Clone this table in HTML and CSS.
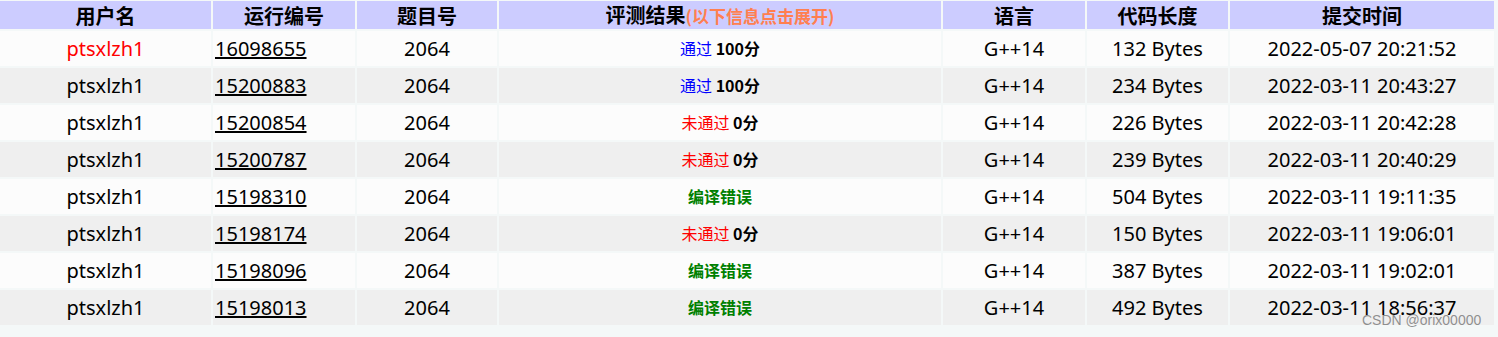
FILE: index.html
```html
<!DOCTYPE html>
<html lang="zh">
<head>
<meta charset="utf-8">
<link rel="stylesheet" href="styles.css">
</head>
<body>
<div class="wrap">
<table class="status">
  <colgroup>
    <col class="c1"><col class="c2"><col class="c3"><col class="c4"><col class="c5"><col class="c6"><col class="c7">
  </colgroup>
  <thead>
    <tr>
      <th>用户名</th><th>运行编号</th><th>题目号</th>
      <th>评测结果<span class="hint">(以下信息点击展开)</span></th>
      <th>语言</th><th>代码长度</th><th>提交时间</th>
    </tr>
  </thead>
  <tbody>
    <tr class="odd"><td class="me">ptsxlzh1</td><td class="rid"><a>16098655</a></td><td>2064</td><td class="res"><a class="ac">通过</a> <b>100分</b></td><td>G++14</td><td>132 Bytes</td><td>2022-05-07 20:21:52</td></tr>
    <tr class="even"><td>ptsxlzh1</td><td class="rid"><a>15200883</a></td><td>2064</td><td class="res"><a class="ac">通过</a> <b>100分</b></td><td>G++14</td><td>234 Bytes</td><td>2022-03-11 20:43:27</td></tr>
    <tr class="odd"><td>ptsxlzh1</td><td class="rid"><a>15200854</a></td><td>2064</td><td class="res"><span class="wa">未通过</span> <b>0分</b></td><td>G++14</td><td>226 Bytes</td><td>2022-03-11 20:42:28</td></tr>
    <tr class="even"><td>ptsxlzh1</td><td class="rid"><a>15200787</a></td><td>2064</td><td class="res"><span class="wa">未通过</span> <b>0分</b></td><td>G++14</td><td>239 Bytes</td><td>2022-03-11 20:40:29</td></tr>
    <tr class="odd"><td>ptsxlzh1</td><td class="rid"><a>15198310</a></td><td>2064</td><td class="res"><span class="ce">编译错误</span></td><td>G++14</td><td>504 Bytes</td><td>2022-03-11 19:11:35</td></tr>
    <tr class="even"><td>ptsxlzh1</td><td class="rid"><a>15198174</a></td><td>2064</td><td class="res"><span class="wa">未通过</span> <b>0分</b></td><td>G++14</td><td>150 Bytes</td><td>2022-03-11 19:06:01</td></tr>
    <tr class="odd"><td>ptsxlzh1</td><td class="rid"><a>15198096</a></td><td>2064</td><td class="res"><span class="ce">编译错误</span></td><td>G++14</td><td>387 Bytes</td><td>2022-03-11 19:02:01</td></tr>
    <tr class="even"><td>ptsxlzh1</td><td class="rid"><a>15198013</a></td><td>2064</td><td class="res"><span class="ce">编译错误</span></td><td>G++14</td><td>492 Bytes</td><td>2022-03-11 18:56:37</td></tr>
  </tbody>
</table>
<div class="mark">CSDN @orix00000</div>
</div>
</body>
</html>
```
FILE: styles.css
```css
html, body {
  margin: 0;
  padding: 0;
  background: #f4f8f8;
}
body {
  font-family: "Noto Sans", "Noto Sans CJK SC", sans-serif;
  color: #000;
  width: 1498px;
  height: 337px;
  overflow: hidden;
}
.wrap {
  position: relative;
  height: 337px;
}
.status {
  border-collapse: separate;
  border-spacing: 2px;
  margin: -1px 0 0 -2px;
  width: 1498px;
  table-layout: fixed;
}
.c1 { width: 211px; }
.c2 { width: 142px; }
.c3 { width: 140px; }
.c4 { width: 442px; }
.c5 { width: 142px; }
.c6 { width: 141px; }
.c7 { width: 264px; }
th {
  background: #ccccff;
  height: 27px;
  padding: 0;
  font-family: "Noto Sans CJK SC", sans-serif;
  font-size: 20px;
  font-weight: bold;
  line-height: 27px;
  text-align: center;
}
.hint {
  color: #ff7f50;
  font-size: 17px;
  font-weight: bold;
}
td {
  height: 35px;
  padding: 0;
  font-size: 20px;
  line-height: 35px;
  text-align: center;
  white-space: nowrap;
}
tr.odd td { background: #fcfcfc; }
tr.even td { background: #efefef; }
td.me { color: #ff0000; }
td.rid { text-align: left; padding-left: 2px; }
td.rid a { color: #000; text-decoration: underline; }
td.res {
  font-family: "Noto Sans CJK SC", sans-serif;
  font-size: 16px;
}
td.res b { font-weight: bold; }
.ac { color: #0000ff; text-decoration: none; }
.wa { color: #ff0000; }
.ce { color: #008000; font-weight: bold; }
.mark {
  position: absolute;
  left: 1362px;
  top: 313px;
  font-family: "Liberation Sans", sans-serif;
  font-size: 14px;
  color: rgba(110, 110, 110, 0.75);
}
```
